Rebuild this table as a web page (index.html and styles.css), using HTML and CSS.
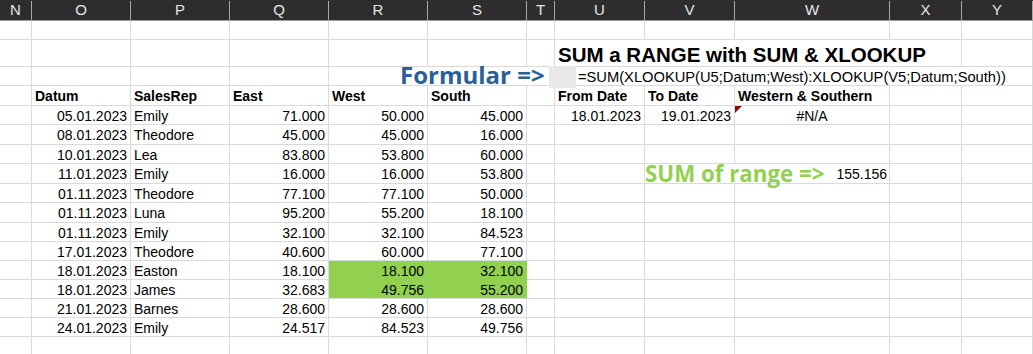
FILE: index.html
```html
<!DOCTYPE html>
<html>
<head>
<meta charset="utf-8">
<link rel="stylesheet" href="styles.css">
</head>
<body>
<div class="cols">
  <div class="h">N</div><div class="h">O</div><div class="h">P</div><div class="h">Q</div><div class="h">R</div><div class="h">S</div><div class="h">T</div><div class="h">U</div><div class="h">V</div><div class="h">W</div><div class="h">X</div><div class="h">Y</div>
</div>
<div class="sheet">
  <!-- row 1 -->
  <div class="c"></div><div class="c"></div><div class="c"></div><div class="c"></div><div class="c"></div><div class="c"></div><div class="c"></div><div class="c"></div><div class="c"></div><div class="c"></div><div class="c"></div><div class="c"></div>
  <!-- row 2 -->
  <div class="c"></div><div class="c"></div><div class="c"></div><div class="c"></div><div class="c"></div><div class="c"></div><div class="c"></div>
  <div class="c title">SUM a RANGE with SUM &amp; XLOOKUP</div>
  <div class="c"></div>
  <!-- row 3 -->
  <div class="c"></div><div class="c"></div><div class="c"></div><div class="c"></div>
  <div class="c formula-row">
    <span class="big blue">Formular =&gt;</span>
    <span class="namebox"></span>
    <span class="formula">=SUM(XLOOKUP(U5;Datum;West):XLOOKUP(V5;Datum;South))</span>
  </div>
  <!-- row 4 -->
  <div class="c"></div>
  <div class="c b">Datum</div><div class="c b">SalesRep</div><div class="c b">East</div><div class="c b">West</div><div class="c b">South</div>
  <div class="c"></div>
  <div class="c b">From Date</div><div class="c b">To Date</div><div class="c b">Western &amp; Southern</div>
  <div class="c"></div><div class="c"></div>
  <!-- row 5 -->
  <div class="c"></div>
  <div class="c r">05.01.2023</div><div class="c">Emily</div><div class="c r">71.000</div><div class="c r">50.000</div><div class="c r">45.000</div>
  <div class="c"></div>
  <div class="c r">18.01.2023</div><div class="c r">19.01.2023</div><div class="c m note">#N/A<span class="tri"></span></div>
  <div class="c"></div><div class="c"></div>
  <!-- row 6 -->
  <div class="c"></div>
  <div class="c r">08.01.2023</div><div class="c">Theodore</div><div class="c r">45.000</div><div class="c r">45.000</div><div class="c r">16.000</div>
  <div class="c"></div><div class="c"></div><div class="c"></div><div class="c"></div><div class="c"></div><div class="c"></div>
  <!-- row 7 -->
  <div class="c"></div>
  <div class="c r">10.01.2023</div><div class="c">Lea</div><div class="c r">83.800</div><div class="c r">53.800</div><div class="c r">60.000</div>
  <div class="c"></div><div class="c"></div><div class="c"></div><div class="c"></div><div class="c"></div><div class="c"></div>
  <!-- row 8 -->
  <div class="c"></div>
  <div class="c r">11.01.2023</div><div class="c">Emily</div><div class="c r">16.000</div><div class="c r">16.000</div><div class="c r">53.800</div>
  <div class="c"></div><div class="c"></div>
  <div class="c sum-row"><span class="big green">SUM of range =&gt;</span><span>155.156</span></div>
  <div class="c"></div><div class="c"></div>
  <!-- row 9 -->
  <div class="c"></div>
  <div class="c r">01.11.2023</div><div class="c">Theodore</div><div class="c r">77.100</div><div class="c r">77.100</div><div class="c r">50.000</div>
  <div class="c"></div><div class="c"></div><div class="c"></div><div class="c"></div><div class="c"></div><div class="c"></div>
  <!-- row 10 -->
  <div class="c"></div>
  <div class="c r">01.11.2023</div><div class="c">Luna</div><div class="c r">95.200</div><div class="c r">55.200</div><div class="c r">18.100</div>
  <div class="c"></div><div class="c"></div><div class="c"></div><div class="c"></div><div class="c"></div><div class="c"></div>
  <!-- row 11 -->
  <div class="c"></div>
  <div class="c r">01.11.2023</div><div class="c">Emily</div><div class="c r">32.100</div><div class="c r">32.100</div><div class="c r">84.523</div>
  <div class="c"></div><div class="c"></div><div class="c"></div><div class="c"></div><div class="c"></div><div class="c"></div>
  <!-- row 12 -->
  <div class="c"></div>
  <div class="c r">17.01.2023</div><div class="c">Theodore</div><div class="c r">40.600</div><div class="c r">60.000</div><div class="c r">77.100</div>
  <div class="c"></div><div class="c"></div><div class="c"></div><div class="c"></div><div class="c"></div><div class="c"></div>
  <!-- row 13 -->
  <div class="c"></div>
  <div class="c r">18.01.2023</div><div class="c">Easton</div><div class="c r">18.100</div><div class="c r g gt">18.100</div><div class="c r g gt">32.100</div>
  <div class="c"></div><div class="c"></div><div class="c"></div><div class="c"></div><div class="c"></div><div class="c"></div>
  <!-- row 14 -->
  <div class="c"></div>
  <div class="c r">18.01.2023</div><div class="c">James</div><div class="c r">32.683</div><div class="c r g">49.756</div><div class="c r g">55.200</div>
  <div class="c"></div><div class="c"></div><div class="c"></div><div class="c"></div><div class="c"></div><div class="c"></div>
  <!-- row 15 -->
  <div class="c"></div>
  <div class="c r">21.01.2023</div><div class="c">Barnes</div><div class="c r">28.600</div><div class="c r">28.600</div><div class="c r">28.600</div>
  <div class="c"></div><div class="c"></div><div class="c"></div><div class="c"></div><div class="c"></div><div class="c"></div>
  <!-- row 16 -->
  <div class="c"></div>
  <div class="c r">24.01.2023</div><div class="c">Emily</div><div class="c r">24.517</div><div class="c r">84.523</div><div class="c r">49.756</div>
  <div class="c"></div><div class="c"></div><div class="c"></div><div class="c"></div><div class="c"></div><div class="c"></div>
  <!-- row 17 -->
  <div class="c"></div><div class="c"></div><div class="c"></div><div class="c"></div><div class="c"></div><div class="c"></div><div class="c"></div><div class="c"></div><div class="c"></div><div class="c"></div><div class="c"></div><div class="c"></div>
</div>
</body>
</html>
```

FILE: styles.css
```css
html, body {
  margin: 0;
  padding: 0;
  background: #ffffff;
}
body {
  width: 1033px;
  height: 354px;
  overflow: hidden;
  font-family: "Liberation Sans", Arial, sans-serif;
  font-size: 14px;
  color: #000;
}
.cols, .sheet {
  display: grid;
  grid-template-columns: 32px 99px 99px 99px 99px 99px 28px 90px 90px 155px 72px minmax(0, 1fr);
}
.cols {
  height: 21px;
  background: #2d2d2d;
  border-bottom: 1px solid #9a9a9a;
  box-sizing: border-box;
}
.h {
  color: #e6e6e6;
  font-size: 15px;
  text-align: center;
  border-right: 1px solid #a8a8a8;
  margin-top: 1px;
  height: 19px;
  line-height: 18px;
}
.sheet {
  grid-template-rows: 19px 27px 19px 20px 19px 20px 19px 20px 19px 20px 19px 19px 19px 19px 19px 19px 18px;
}
.c {
  box-sizing: border-box;
  min-width: 0;
  border-right: 1px solid #dadada;
  border-bottom: 1px solid #dadada;
  display: flex;
  align-items: center;
  padding: 1px 3px 0 3px;
  white-space: nowrap;
  line-height: 16px;
}
.r { justify-content: flex-end; }
.m { justify-content: center; }
.b { font-weight: bold; }
.g {
  background: #92d050;
  border-right-color: #92d050;
}
.gt { border-bottom-color: #92d050; }
.note { position: relative; }
.tri {
  position: absolute;
  top: 0;
  left: 0;
  width: 0;
  height: 0;
  border-top: 7px solid #8b0d0d;
  border-right: 7px solid transparent;
}
.title {
  grid-column: span 4;
  font-weight: bold;
  font-size: 20.5px;
  align-items: flex-end;
  padding-bottom: 3px;
}
.formula-row {
  grid-column: span 8;
  padding-left: 71px;
  overflow: visible;
}
.big {
  font-family: "Open Sans", "Liberation Sans", sans-serif;
  font-weight: 700;
  line-height: 18px;
}
.blue {
  color: #2a6099;
  font-size: 24px;
  width: 145px;
  flex: none;
  margin-bottom: 4px;
}
.green {
  color: #92d050;
  font-size: 22.3px;
}
.namebox {
  width: 27px;
  height: 22px;
  background: #e8e8e8;
  margin-left: 4px;
  align-self: center;
  flex: none;
}
.formula {
  font-size: 14.7px;
  margin-left: 2px;
}
.sum-row {
  grid-column: span 2;
  justify-content: space-between;
  padding-left: 0;
  padding-right: 2px;
}
```
